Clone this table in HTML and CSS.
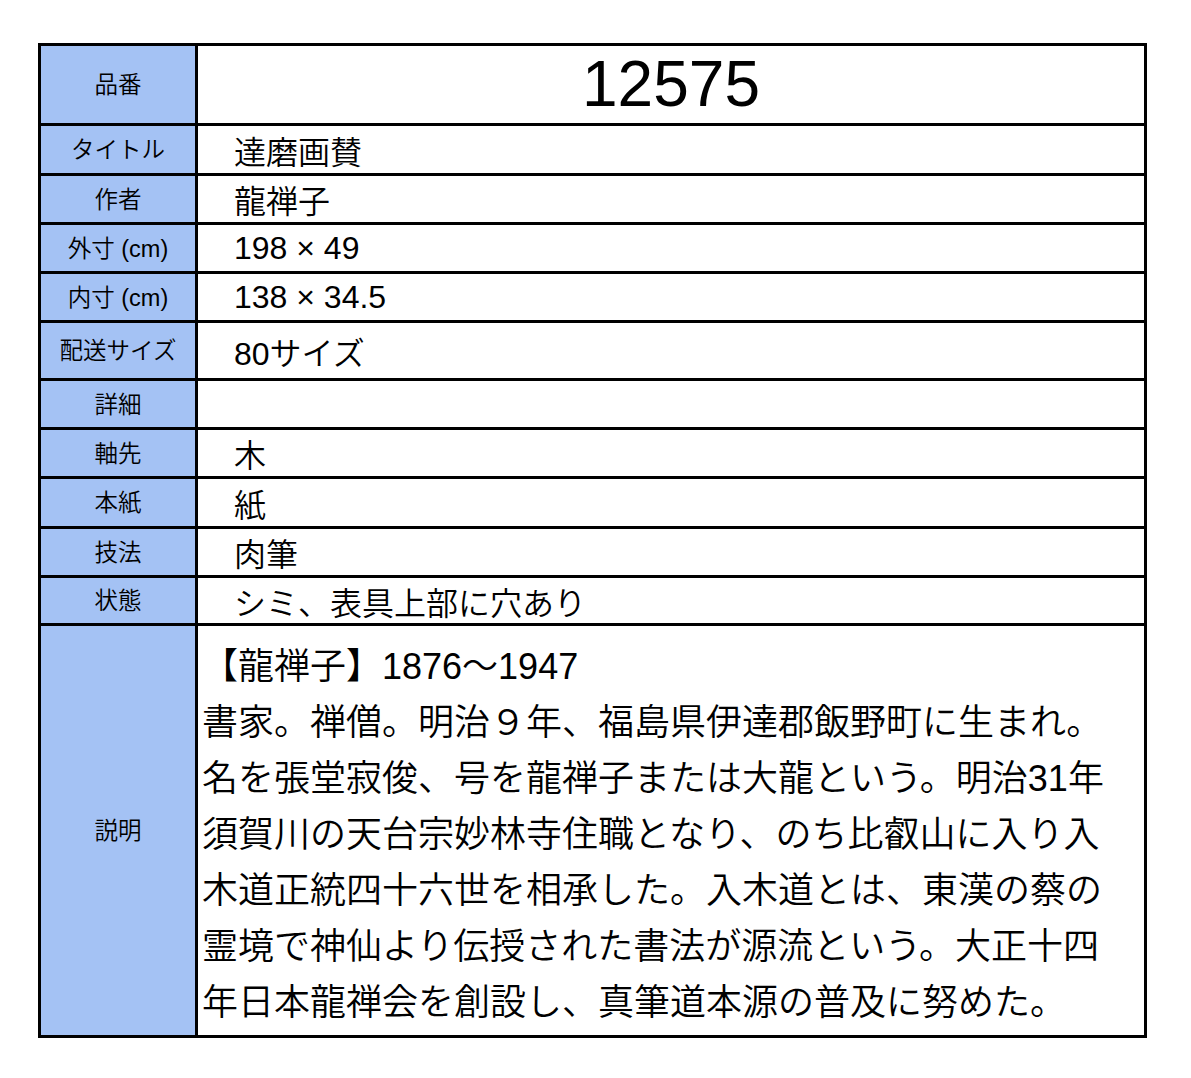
FILE: index.html
```html
<!DOCTYPE html>
<html lang="ja">
<head>
<meta charset="utf-8">
<title>12575 達磨画賛</title>
<link rel="stylesheet" href="styles.css">
</head>
<body>
<div class="sheet">
  <div class="label r1">品番</div><div class="value number r1">12575</div>
  <div class="label r2">タイトル</div><div class="value r2">達磨画賛</div>
  <div class="label">作者</div><div class="value">龍禅子</div>
  <div class="label">外寸 (cm)</div><div class="value">198 × 49</div>
  <div class="label">内寸 (cm)</div><div class="value">138 × 34.5</div>
  <div class="label">配送サイズ</div><div class="value">80サイズ</div>
  <div class="label">詳細</div><div class="value"></div>
  <div class="label">軸先</div><div class="value">木</div>
  <div class="label">本紙</div><div class="value">紙</div>
  <div class="label">技法</div><div class="value">肉筆</div>
  <div class="label">状態</div><div class="value">シミ、表具上部に穴あり</div>
  <div class="label">説明</div>
  <div class="value desc">
    <span class="line">【龍禅子】1876〜1947</span>
    <span class="line">書家。禅僧。明治９年、福島県伊達郡飯野町に生まれ。</span>
    <span class="line">名を張堂寂俊、号を龍禅子または大龍という。明治31年</span>
    <span class="line">須賀川の天台宗妙林寺住職となり、のち比叡山に入り入</span>
    <span class="line">木道正統四十六世を相承した。入木道とは、東漢の蔡の</span>
    <span class="line">霊境で神仙より伝授された書法が源流という。大正十四</span>
    <span class="line">年日本龍禅会を創設し、真筆道本源の普及に努めた。</span>
  </div>
</div>
</body>
</html>
```
FILE: styles.css
```css
html, body {
  margin: 0;
  padding: 0;
  background: #ffffff;
}
body {
  padding: 43px 0 0 38px;
  font-family: "Liberation Sans", "Noto Sans CJK JP", sans-serif;
  font-weight: 350;
  color: #000000;
}
.sheet {
  width: 1103px;
  border: 3px solid #000000;
  display: grid;
  grid-template-columns: 157px 946px;
  grid-template-rows: 77px 50px 49px 49px 49px 58px 49px 49px 50px 49px 48px 412px;
}
.label, .value {
  box-sizing: border-box;
  border-top: 3px solid #000000;
  display: flex;
  align-items: center;
}
.r1 {
  border-top: none;
}
.label {
  background: #a4c2f4;
  border-right: 3px solid #000000;
  justify-content: center;
  font-size: 23.5px;
  padding-bottom: 3px;
}
.value {
  padding-left: 36px;
  font-size: 32px;
  white-space: nowrap;
}
.number {
  justify-content: center;
  padding-left: 0;
  padding-bottom: 2px;
  font-size: 64px;
}
.desc {
  flex-direction: column;
  align-items: flex-start;
  padding: 13px 0 0 4px;
  font-size: 36px;
  line-height: 56px;
}
.line {
  display: block;
  white-space: nowrap;
}
```
